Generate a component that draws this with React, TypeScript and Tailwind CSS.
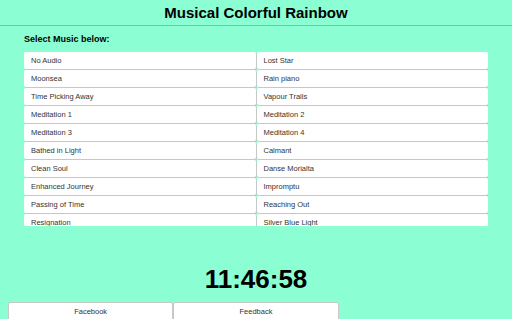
import React from 'react';

const tracks: string[] = [
  'No Audio', 'Lost Star',
  'Moonsea', 'Rain piano',
  'Time Picking Away', 'Vapour Trails',
  'Meditation 1', 'Meditation 2',
  'Meditation 3', 'Meditation 4',
  'Bathed in Light', 'Calmant',
  'Clean Soul', 'Danse Morialta',
  'Enhanced Journey', 'Impromptu',
  'Passing of Time', 'Reaching Out',
  'Resignation', 'Silver Blue Light',
];

export default function App() {
  return (
    <div className="h-[319px] w-full overflow-hidden bg-[#8bffd3] font-['Liberation_Sans',Arial,sans-serif] text-black antialiased">
      <header className="flex h-[26px] items-center justify-center border-b border-[#a3aea9]">
        <h1 className="text-[15px] font-bold leading-none">Musical Colorful Rainbow</h1>
      </header>

      <div className="px-[24px]">
        <h2 className="mt-[8px] text-[9px] font-bold leading-[11px]">Select Music below:</h2>

        <div className="mt-[7px] h-[174px] overflow-hidden">
          <div className="grid grid-cols-2 gap-px">
            {tracks.map((name) => (
              <button
                key={name}
                className="flex h-[17px] items-center rounded-[2px] bg-white px-[7px] text-left text-[7.5px] text-[#333] shadow-[1px_1px_0_#c4c8c6]"
              >
                {name}
              </button>
            ))}
          </div>
        </div>
      </div>

      <div className="mt-[38px] text-center text-[26px] font-bold leading-[30px]">11:46:58</div>

      <div className="mt-[8px] grid grid-cols-3 px-[8px]">
        <button className="h-[20px] rounded-t-[2px] border border-[#c8c8c8] bg-white text-[7.5px] text-[#333]">
          Facebook
        </button>
        <button className="h-[20px] rounded-t-[2px] border border-[#c8c8c8] bg-white text-[7.5px] text-[#333]">
          Feedback
        </button>
      </div>
    </div>
  );
}
